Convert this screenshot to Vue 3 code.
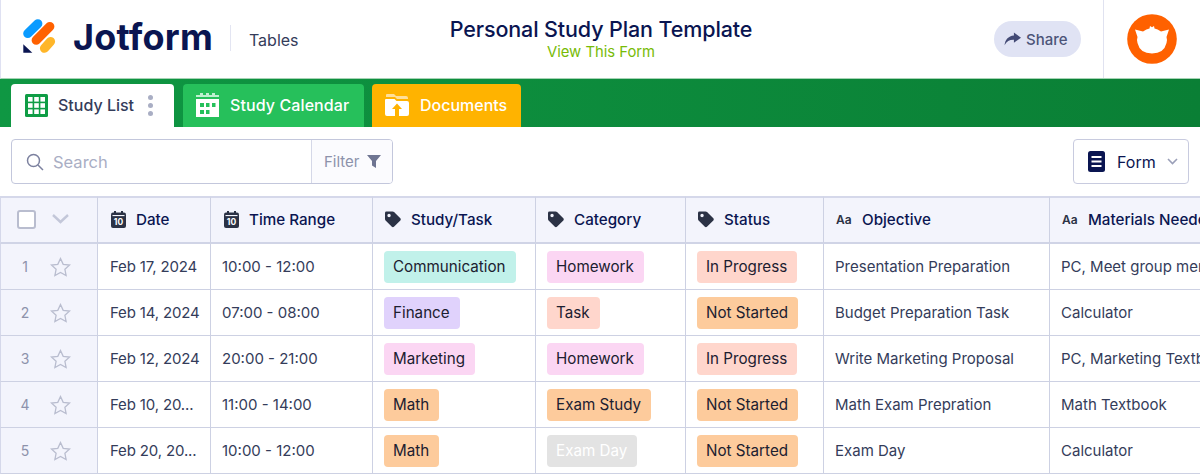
<script setup>
const tagColors = {
  Communication: '#c1f1ea',
  Finance: '#e0d2fc',
  Marketing: '#fbd6f3',
  Math: '#fdcb9c',
  Homework: '#fbd6f3',
  Task: '#ffd6cc',
  'Exam Study': '#fdcb9c',
  'Exam Day': '#e3e3e3',
  'In Progress': '#ffd6cc',
  'Not Started': '#fdcb9c'
}

const columns = [
  { name: 'Date', icon: 'date' },
  { name: 'Time Range', icon: 'date' },
  { name: 'Study/Task', icon: 'tag' },
  { name: 'Category', icon: 'tag' },
  { name: 'Status', icon: 'tag' },
  { name: 'Objective', icon: 'text' },
  { name: 'Materials Needed', icon: 'text' }
]

const rows = [
  { date: 'Feb 17, 2024', time: '10:00 - 12:00', task: 'Communication', category: 'Homework', status: 'In Progress', objective: 'Presentation Preparation', materials: 'PC, Meet group members' },
  { date: 'Feb 14, 2024', time: '07:00 - 08:00', task: 'Finance', category: 'Task', status: 'Not Started', objective: 'Budget Preparation Task', materials: 'Calculator' },
  { date: 'Feb 12, 2024', time: '20:00 - 21:00', task: 'Marketing', category: 'Homework', status: 'In Progress', objective: 'Write Marketing Proposal', materials: 'PC, Marketing Textbook' },
  { date: 'Feb 10, 20...', time: '11:00 - 14:00', task: 'Math', category: 'Exam Study', status: 'Not Started', objective: 'Math Exam Prepration', materials: 'Math Textbook' },
  { date: 'Feb 20, 20...', time: '10:00 - 12:00', task: 'Math', category: 'Exam Day', status: 'Not Started', objective: 'Exam Day', materials: 'Calculator' }
]
</script>

<template>
  <div class="page">
    <header class="topbar">
      <div class="brand">
        <svg class="logo" width="34" height="36" viewBox="0 0 34 36" fill="none" stroke-linecap="round" stroke-width="9.2">
          <path d="M5.8 15.5 L15.8 5.8" stroke="#0a9bff" />
          <path d="M14.2 22.2 L27.8 8.5" stroke="#ff6100" />
          <path d="M22.5 30.2 L28.5 23.5" stroke="#ffb629" />
          <path d="M1.3 26.3 L10.3 34.7 H1.3 Z" fill="#0a1551" />
        </svg>
        <span class="wordmark">Jotform</span>
        <span class="brand-sep"></span>
        <span class="product">Tables</span>
      </div>
      <div class="title">
        <div class="title-main">Personal Study Plan Template</div>
        <div class="title-link">View This Form</div>
      </div>
      <div class="share-wrap">
        <button class="share">
          <svg width="17" height="14" viewBox="0 0 18 14"><path d="M10.5 0 L18 5.6 L10.5 11 V7.8 C6 7.6 2.8 9.4 0.6 13.6 C1 8 4.5 3.6 10.5 3.2 Z" fill="#434a75" />
          </svg>
          <span class="share-label">Share</span>
        </button>
      </div>
      <div class="avatar-wrap">
        <svg width="50" height="50" viewBox="0 0 50 50">
          <circle cx="25" cy="25" r="24.8" fill="#ff6100" />
          <path d="M8 15.5 L16 17.5 Q19.5 15.2 22.5 14.6 L23 12 L25 13.3 L27 12 L27.5 14.6 Q30.5 15.2 34 17.5 L42 15.5 L39.5 23 Q40.5 26 39.5 29 Q37 39.5 25 39.5 Q13 39.5 10.5 29 Q9.5 26 10.5 23 Z" fill="#fff" />
        </svg>
      </div>
    </header>

    <nav class="tabs">
      <div class="tab tab-list">
        <svg width="23" height="23" viewBox="0 0 23 23">
          <rect width="23" height="23" rx="1.5" fill="#0f9d45" />
          <g fill="#fff">
            <rect x="3" y="3" width="4.6" height="4.6" /><rect x="9.2" y="3" width="4.6" height="4.6" /><rect x="15.4" y="3" width="4.6" height="4.6" />
            <rect x="3" y="9.2" width="4.6" height="4.6" /><rect x="9.2" y="9.2" width="4.6" height="4.6" /><rect x="15.4" y="9.2" width="4.6" height="4.6" />
            <rect x="3" y="15.4" width="4.6" height="4.6" /><rect x="9.2" y="15.4" width="4.6" height="4.6" /><rect x="15.4" y="15.4" width="4.6" height="4.6" />
          </g>
        </svg>
        <span>Study List</span>
        <span class="dots"><i></i><i></i><i></i></span>
      </div>
      <div class="tab tab-calendar">
        <svg width="23" height="24" viewBox="0 0 23 24">
          <rect y="2" width="23" height="2" fill="#bff0d0" />
          <rect x="4" y="0" width="3" height="3" fill="#bff0d0" /><rect x="10" y="0" width="3" height="3" fill="#bff0d0" /><rect x="16" y="0" width="3" height="3" fill="#bff0d0" />
          <path fill-rule="evenodd" d="M0 6 H23 V24 H0 Z M4 10 V14 H8 V10 Z M10 10 V14 H13.5 V10 Z M16 10 V14 H19.5 V10 Z M4 17 V21 H8 V17 Z M10 17 V21 H13.5 V17 Z" fill="#fff" />
        </svg>
        <span>Study Calendar</span>
      </div>
      <div class="tab tab-docs">
        <svg width="24" height="22" viewBox="0 0 24 22">
          <path d="M1 3 V1 Q1 0 2 0 H9 L11 2 H21 Q23 2 23 4 V5 H12 L10 3 Z" fill="#ffdf9a" />
          <path fill-rule="evenodd" d="M0 6 Q0 5 1 5 H9.5 L11.5 7 H22 Q24 7 24 9 V20 Q24 22 22 22 H2 Q0 22 0 20 Z M12 9.5 L7 15 H10 V22 H14 V15 H17 Z" fill="#fff" />
        </svg>
        <span>Documents</span>
      </div>
    </nav>

    <section class="toolbar">
      <div class="search">
        <div class="search-input">
          <svg width="18" height="18" viewBox="0 0 18 18" fill="none" stroke="#7c819f" stroke-width="1.5"><circle cx="7.5" cy="7.5" r="6" /><path d="M12 12 L17 17" /></svg>
          <span>Search</span>
        </div>
        <div class="filter">
          Filter
          <svg width="14" height="13" viewBox="0 0 14 13"><path d="M0 0 H14 L9 6 V13 L5 10.5 V6 Z" fill="#6f7592" /></svg>
        </div>
      </div>
      <button class="form-btn">
        <svg width="17" height="21" viewBox="0 0 17 21">
          <rect width="17" height="21" rx="2.5" fill="#0a1551" />
          <path d="M3.5 6 H13.5 M3.5 10.5 H13.5 M3.5 15 H13.5" stroke="#fff" stroke-width="2" />
        </svg>
        <span>Form</span>
        <svg width="11" height="7" viewBox="0 0 11 7" fill="none" stroke="#9a9fb8" stroke-width="1.6"><path d="M1 1 L5.5 5.5 L10 1" /></svg>
      </button>
    </section>

    <div class="grid">
      <div class="th th-first">
        <span class="checkbox"></span>
        <svg width="17" height="10" viewBox="0 0 17 10" fill="none" stroke="#c3c7d9" stroke-width="2.4"><path d="M1 1 L8.5 8 L16 1" /></svg>
      </div>
      <div v-for="col in columns" :key="col.name" class="th">
        <svg v-if="col.icon === 'date'" class="th-date" width="15" height="17" viewBox="0 0 15 17">
          <rect x="3" y="0" width="2" height="3" fill="#2b3245" /><rect x="10" y="0" width="2" height="3" fill="#2b3245" />
          <rect y="1.5" width="15" height="15.5" rx="2" fill="#2b3245" />
          <rect x="1.5" y="4" width="12" height="1.1" fill="#f3f4fc" />
          <text x="7.5" y="14.4" text-anchor="middle" font-size="8.5" font-weight="700" fill="#fff" font-family="Inter, sans-serif">10</text>
        </svg>
        <svg v-else-if="col.icon === 'tag'" width="16" height="17" viewBox="0 0 17 17">
          <path fill-rule="evenodd" d="M1.5 0 H8 Q9 0 9.6 .6 L16.3 7.3 Q17.2 8.4 16.3 9.5 L9.5 16.3 Q8.4 17.2 7.3 16.3 L.6 9.6 Q0 9 0 8 V1.5 Q0 0 1.5 0 Z M4.3 2.5 A1.8 1.8 0 1 0 4.3 6.1 A1.8 1.8 0 1 0 4.3 2.5 Z" fill="#2b3245" />
        </svg>
        <span v-else class="aa">Aa</span>
        <span class="th-label">{{ col.name }}</span>
      </div>

      <template v-for="(row, i) in rows" :key="i">
        <div class="td td-first">
          <span class="num">{{ i + 1 }}</span>
          <svg width="21" height="20" viewBox="0 0 21 20" fill="none" stroke="#b9bdcf" stroke-width="1.3"><path d="M10.5 1.5 L13.2 7.3 L19.6 8 L14.9 12.3 L16.1 18.6 L10.5 15.5 L4.9 18.6 L6.1 12.3 L1.4 8 L7.8 7.3 Z" /></svg>
        </div>
        <div class="td td-date">{{ row.date }}</div>
        <div class="td">{{ row.time }}</div>
        <div class="td"><span class="pill" :style="{ background: tagColors[row.task] }">{{ row.task }}</span></div>
        <div class="td"><span class="pill" :class="{ muted: row.category === 'Exam Day' }" :style="{ background: tagColors[row.category] }">{{ row.category }}</span></div>
        <div class="td"><span class="pill" :style="{ background: tagColors[row.status] }">{{ row.status }}</span></div>
        <div class="td">{{ row.objective }}</div>
        <div class="td">{{ row.materials }}</div>
      </template>
    </div>
  </div>
</template>

<style>
html, body {
  margin: 0;
  overflow: hidden;
  background: #fff;
}
</style>

<style scoped>
.page {
  width: 1200px;
  height: 474px;
  overflow: hidden;
  font-family: Inter, "Noto Sans", sans-serif;
  color: #343c5a;
}

.topbar {
  height: 79px;
  box-sizing: border-box;
  border-left: 1px solid #dfe1f2;
  border-bottom: 1px solid #a5d3b4;
  display: flex;
  position: relative;
  background: #fff;
}
.brand {
  display: flex;
  align-items: center;
  padding-left: 21px;
}
.logo {
  margin-top: -6px;
}
.wordmark {
  margin-left: 17px;
  margin-bottom: 4px;
  font-size: 36px;
  font-weight: 700;
  letter-spacing: 0.2px;
  color: #0a1551;
}
.brand-sep {
  width: 1px;
  height: 26px;
  background: #e3e5f2;
  margin-left: 17px;
  margin-bottom: 2px;
}
.product {
  margin-left: 18px;
  margin-top: 1px;
  font-size: 16px;
  color: #343c5a;
}
.title {
  position: absolute;
  left: 400px;
  width: 400px;
  top: 17px;
  text-align: center;
}
.title-main {
  font-size: 21.5px;
  line-height: 25px;
  font-weight: 500;
  color: #0a1551;
  letter-spacing: -0.12px;
}
.title-link {
  font-size: 14.8px;
  line-height: 20px;
  color: #78bb07;
}
.share-wrap {
  margin-left: auto;
  display: flex;
  align-items: center;
  padding-right: 22px;
  padding-bottom: 1px;
}
.share {
  width: 87px;
  height: 36px;
  border: 0;
  border-radius: 18px;
  background: #e0e3f4;
  color: #4c5478;
  font: 500 15px Inter, sans-serif;
  display: flex;
  align-items: center;
  padding: 0 0 0 10px;
  gap: 5px;
}
.share-label {
  margin-top: 1px;
}
.avatar-wrap {
  width: 97px;
  border-left: 1px solid #e0e2f0;
  display: flex;
  align-items: center;
  padding-left: 23px;
  box-sizing: border-box;
}

.tabs {
  height: 48px;
  box-sizing: border-box;
  padding: 5px 0 0 11px;
  background: linear-gradient(90deg, #0f9743, #0a7f35);
  display: flex;
  gap: 9px;
}
.tab {
  height: 43px;
  border-radius: 4px 4px 0 0;
  display: flex;
  align-items: center;
  font-size: 16px;
  font-weight: 500;
  color: #fff;
  box-sizing: border-box;
  padding-bottom: 1px;
}
.tab-list {
  width: 163px;
  background: #fff;
  color: #343c5a;
  padding-left: 14px;
  gap: 10px;
}
.dots {
  display: flex;
  flex-direction: column;
  gap: 3px;
  margin-left: 4px;
}
.dots i {
  display: block;
  width: 5px;
  height: 5px;
  border-radius: 50%;
  background: #a9aec4;
}
.tab-calendar {
  width: 181px;
  background: #26c05b;
  padding-left: 13px;
  gap: 11px;
  letter-spacing: 0.1px;
}
.tab-docs {
  width: 149px;
  margin-left: -1px;
  background: #ffb300;
  padding-left: 13px;
  gap: 11px;
}

.toolbar {
  height: 69px;
  box-sizing: border-box;
  padding: 12px 11px 0;
  display: flex;
  justify-content: space-between;
  align-items: flex-start;
}
.search {
  width: 382px;
  height: 45px;
  box-sizing: border-box;
  border: 1px solid #c3c7dc;
  border-radius: 4px;
  display: flex;
  overflow: hidden;
}
.search-input {
  flex: 1;
  display: flex;
  align-items: center;
  gap: 9px;
  padding-left: 14px;
  font-size: 16.5px;
  color: #a9aec4;
}
.filter {
  width: 81px;
  box-sizing: border-box;
  border-left: 1px solid #d5d8e8;
  background: #fbfbfe;
  display: flex;
  align-items: center;
  padding-left: 12px;
  gap: 7px;
  font-size: 15px;
  color: #8d92ab;
}
.form-btn {
  width: 116px;
  height: 45px;
  box-sizing: border-box;
  border: 1px solid #c8cbdf;
  border-radius: 4px;
  background: #fff;
  display: flex;
  align-items: center;
  padding: 0 0 0 14px;
  font: 400 16px Inter, sans-serif;
  color: #0a1551;
}
.form-btn span {
  margin: 0 11px 0 12px;
}

.grid {
  display: grid;
  grid-template-columns: 98px 113px 162px 163px 150px 138px 226px 300px;
  grid-template-rows: 48px;
  grid-auto-rows: 46px;
  width: 1350px;
}
.th {
  box-sizing: border-box;
  background: #f3f4fc;
  border-top: 2px solid #d5d8ea;
  border-bottom: 2px solid #d0d4e6;
  border-right: 1px solid #cdd1e3;
  display: flex;
  align-items: center;
  padding: 0 0 2px 12px;
  gap: 10px;
  white-space: nowrap;
}
.th-date {
  margin-left: 1px;
}
.th-label {
  font-size: 15.2px;
  font-weight: 500;
  color: #0a1551;
}
.th-first {
  padding-left: 16px;
  gap: 16px;
  border-left: 1px solid #d5d8ea;
}
.checkbox {
  width: 19px;
  height: 19px;
  box-sizing: border-box;
  border: 2px solid #b9bdcf;
  border-radius: 3px;
  background: #fff;
}
.aa {
  font-size: 12px;
  font-weight: 600;
  color: #2b3245;
  width: 16px;
}
.td {
  box-sizing: border-box;
  border-bottom: 1px solid #cdd1e3;
  border-right: 1px solid #cdd1e3;
  display: flex;
  align-items: center;
  padding-left: 11px;
  font-size: 15px;
  color: #343c5a;
  white-space: nowrap;
  overflow: hidden;
}
.td-first {
  background: #f3f4fc;
  padding-left: 19px;
  gap: 20px;
  border-left: 1px solid #d5d8ea;
  color: #8d92ab;
}
.td-date {
  padding-left: 12px;
  letter-spacing: -0.15px;
}
.num {
  width: 10px;
  font-size: 14px;
  text-align: center;
}
.pill {
  height: 32px;
  line-height: 32px;
  padding: 0 10px 0 9px;
  border-radius: 4px;
  font-size: 15.2px;
  color: #1c2030;
}
.pill.muted {
  color: #fff;
}
</style>
